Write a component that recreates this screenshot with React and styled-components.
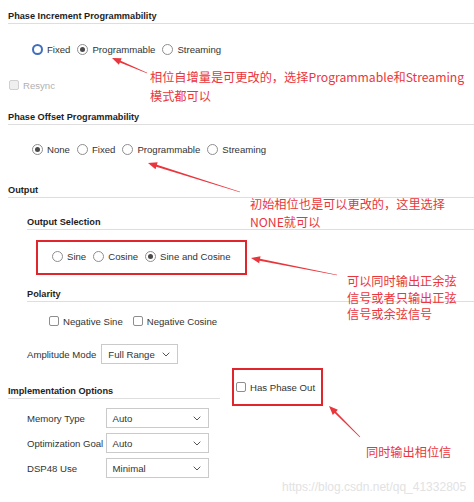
import React from 'react'
import styled, { createGlobalStyle } from 'styled-components'

const GlobalStyle = createGlobalStyle`
  html, body {
    margin: 0;
    padding: 0;
    background: #fff;
  }
  body {
    font-family: "Liberation Sans", Arial, sans-serif;
  }
`

const RED = '#e9363c'

function arrowPoints(x1, y1, x2, y2) {
  const dx = x2 - x1
  const dy = y2 - y1
  const len = Math.hypot(dx, dy)
  const ux = dx / len
  const uy = dy / len
  const px = -uy
  const py = ux
  const hl = 9
  const hw = 3.6
  const bx = x2 - ux * hl
  const by = y2 - uy * hl
  const t = 0.35
  const s = 1.0
  const pts = [
    [x1 + px * t, y1 + py * t],
    [bx + px * s, by + py * s],
    [bx + px * hw, by + py * hw],
    [x2, y2],
    [bx - px * hw, by - py * hw],
    [bx - px * s, by - py * s],
    [x1 - px * t, y1 - py * t],
  ]
  return pts.map(p => p.map(v => v.toFixed(2)).join(',')).join(' ')
}

const arrows = [
  [147, 73, 112, 58],
  [240, 192, 148, 163],
  [337, 275, 251, 258],
  [360, 437, 329, 406],
]

function Chevron() {
  return (
    <svg width="8" height="5" viewBox="0 0 8 5">
      <polyline points="0.7,0.7 4,4 7.3,0.7" fill="none" stroke="#555" strokeWidth="1" />
    </svg>
  )
}

function RadioOption({ label, checked, focus }) {
  return (
    <Option>
      <Radio $checked={checked} $focus={focus} />
      {label}
    </Option>
  )
}

function CheckOption({ label, disabled, gap }) {
  return (
    <Option $disabled={disabled} $gap={gap}>
      <Checkbox $disabled={disabled} />
      {label}
    </Option>
  )
}

function Select({ value, width }) {
  return (
    <SelectBox $width={width}>
      <span>{value}</span>
      <Chevron />
    </SelectBox>
  )
}

export default function App() {
  return (
    <>
      <GlobalStyle />
      <Page>
        <Title $top={10}>Phase Increment Programmability</Title>
        <OptionRow $top={18} $left={24}>
          <RadioOption label="Fixed" focus />
          <RadioOption label="Programmable" checked />
          <RadioOption label="Streaming" />
        </OptionRow>
        <OptionRow $top={22} $left={1}>
          <CheckOption label="Resync" disabled />
        </OptionRow>

        <Title $top={19}>Phase Offset Programmability</Title>
        <OptionRow $top={17} $left={24}>
          <RadioOption label="None" checked />
          <RadioOption label="Fixed" />
          <RadioOption label="Programmable" />
          <RadioOption label="Streaming" />
        </OptionRow>

        <Title $top={28}>Output</Title>
        <Title $top={18} $indent={19}>Output Selection</Title>
        <MarkBox $width={211} $top={10} $left={28} $pad="7px 0 10px 14px">
          <OptionRow $top={0} $left={0}>
            <RadioOption label="Sine" />
            <RadioOption label="Cosine" />
            <RadioOption label="Sine and Cosine" checked />
          </OptionRow>
        </MarkBox>

        <Title $top={13} $indent={19}>Polarity</Title>
        <OptionRow $top={12} $left={41}>
          <CheckOption label="Negative Sine" gap={10} />
          <CheckOption label="Negative Cosine" />
        </OptionRow>

        <Lower>
          <LeftColumn>
            <AmpRow>
              <FieldLabel>Amplitude Mode</FieldLabel>
              <Select value="Full Range" width={77} />
            </AmpRow>
            <Title $top={21}>Implementation Options</Title>
            <FieldGrid>
              <FieldLabel>Memory Type</FieldLabel>
              <Select value="Auto" width={103} />
              <FieldLabel>Optimization Goal</FieldLabel>
              <Select value="Auto" width={103} />
              <FieldLabel>DSP48 Use</FieldLabel>
              <Select value="Minimal" width={103} />
            </FieldGrid>
          </LeftColumn>
          <MarkBox $width={91} $top={24} $left={12} $pad="10px 0 10px 2px">
            <OptionRow $top={0} $left={0}>
              <CheckOption label="Has Phase Out" />
            </OptionRow>
          </MarkBox>
        </Lower>

        <Arrows viewBox="0 0 474 502">
          {arrows.map((a, i) => (
            <polygon key={i} points={arrowPoints(...a)} fill={RED} />
          ))}
        </Arrows>

        <Note $left={150} $top={68} $lh={19}>
          相位自增量是可更改的，选择Programmable和Streaming
          <br />
          模式都可以
        </Note>
        <Note $left={250} $top={195} $lh={18}>
          初始相位也是可以更改的，这里选择
          <br />
          NONE就可以
        </Note>
        <Note $left={347} $top={273} $lh={16.7}>
          可以同时输出正余弦
          <br />
          信号或者只输出正弦
          <br />
          信号或余弦信号
        </Note>
        <Note $left={366} $top={443} $lh={18}>
          同时输出相位信
        </Note>
        <Watermark>https://blog.csdn.net/qq_41332805</Watermark>
      </Page>
    </>
  )
}

const Page = styled.div`
  position: relative;
  display: flow-root;
  width: 474px;
  height: 502px;
  overflow: hidden;
  box-sizing: border-box;
  padding-left: 8px;
  font-size: 9.6px;
  color: #333;
`

const Title = styled.div`
  margin: ${p => p.$top}px 0 0 ${p => p.$indent || 0}px;
  font-weight: bold;
  font-size: 9.2px;
  line-height: 12px;
  padding-bottom: 1px;
  border-bottom: 1px solid #dedede;
  color: #1e1e1e;
  white-space: nowrap;
`

const OptionRow = styled.div`
  display: flex;
  align-items: center;
  height: 14px;
  margin-top: ${p => p.$top}px;
  padding-left: ${p => p.$left}px;
`

const Option = styled.div`
  display: flex;
  align-items: center;
  gap: 4px;
  margin-right: ${p => (p.$gap !== undefined ? p.$gap : 7)}px;
  color: ${p => (p.$disabled ? '#b0b0b0' : '#333')};
  white-space: nowrap;
`

const Radio = styled.span`
  box-sizing: border-box;
  width: 11px;
  height: 11px;
  border-radius: 50%;
  border: ${p => (p.$focus ? '2px solid #3f6fbf' : '1px solid #8e8e8e')};
  background: #fff;
  display: flex;
  align-items: center;
  justify-content: center;
  &::after {
    content: '';
    display: ${p => (p.$checked ? 'block' : 'none')};
    width: 5px;
    height: 5px;
    border-radius: 50%;
    background: #4a4a4a;
  }
`

const Checkbox = styled.span`
  box-sizing: border-box;
  width: 10px;
  height: 10px;
  border-radius: 2px;
  border: 1px solid ${p => (p.$disabled ? '#d0d0d0' : '#8e8e8e')};
  background: ${p => (p.$disabled ? '#efefef' : '#fff')};
`

const MarkBox = styled.div`
  box-sizing: border-box;
  flex: none;
  width: ${p => p.$width}px;
  margin-top: ${p => p.$top}px;
  margin-left: ${p => p.$left}px;
  padding: ${p => p.$pad};
  border: 2px solid #e0262c;
`

const Lower = styled.div`
  display: flex;
  align-items: flex-start;
  margin-top: 16px;
`

const LeftColumn = styled.div`
  width: 212px;
  flex: none;
`

const AmpRow = styled.div`
  display: flex;
  align-items: center;
  gap: 5px;
  margin-left: 19px;
`

const FieldLabel = styled.span`
  color: #333;
  white-space: nowrap;
`

const FieldGrid = styled.div`
  display: grid;
  grid-template-columns: 78.6px 103px;
  row-gap: 5px;
  align-items: center;
  margin: 9px 0 0 19px;
`

const SelectBox = styled.div`
  box-sizing: border-box;
  width: ${p => p.$width}px;
  height: 20px;
  display: flex;
  align-items: center;
  justify-content: space-between;
  padding: 0 7px 0 6px;
  border: 1px solid #cacaca;
  background: #fff;
  color: #333;
`

const Arrows = styled.svg`
  position: absolute;
  left: 0;
  top: 0;
  width: 474px;
  height: 502px;
  pointer-events: none;
`

const Note = styled.div`
  position: absolute;
  left: ${p => p.$left}px;
  top: ${p => p.$top}px;
  font-family: "Noto Sans CJK SC", "Noto Sans", sans-serif;
  font-size: 12.2px;
  line-height: ${p => p.$lh}px;
  color: ${RED};
  white-space: nowrap;
`

const Watermark = styled.div`
  position: absolute;
  left: 282px;
  top: 479px;
  font-size: 12px;
  line-height: 16px;
  color: #e2e2e2;
  white-space: nowrap;
`
